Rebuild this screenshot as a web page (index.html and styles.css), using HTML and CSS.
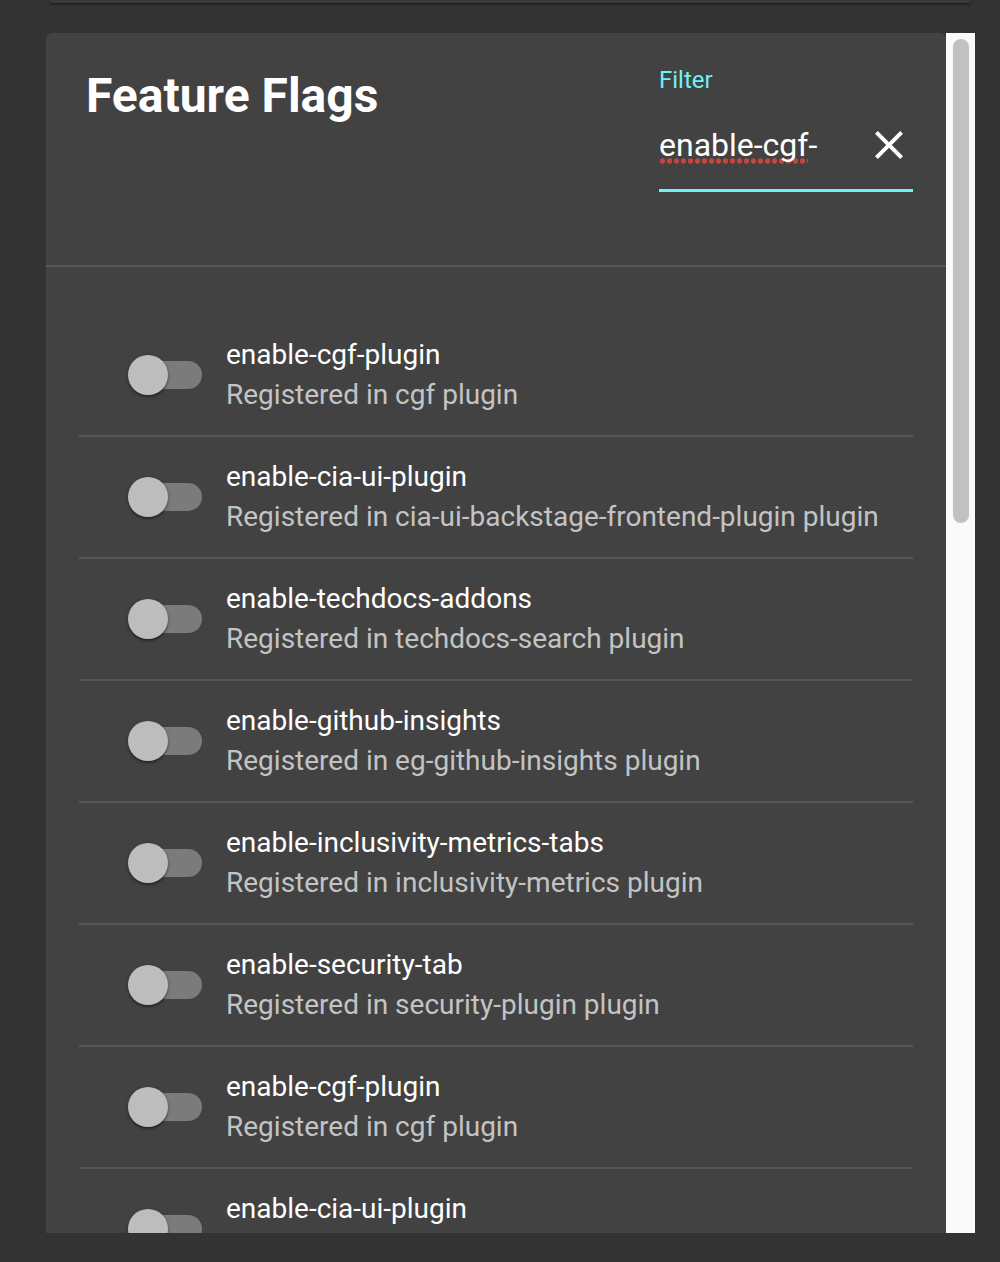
FILE: index.html
```html
<!DOCTYPE html>
<html lang="en">
<head>
<meta charset="utf-8">
<title>Feature Flags</title>
<link rel="stylesheet" href="styles.css">
</head>
<body>
<div class="peek"></div>
<div class="viewport">
  <div class="card">
    <div class="header">
      <h1 class="title">Feature Flags</h1>
      <div class="filter">
        <div class="filter-label">Filter</div>
        <div class="filter-input">
          <div class="filter-text"><span class="misspelled">enable-cgf</span>-</div>
          <svg class="clear" viewBox="0 0 24 24" width="48" height="48"><path fill="#ffffff" d="M19 6.41L17.59 5 12 10.59 6.41 5 5 6.41 10.59 12 5 17.59 6.41 19 12 13.41 17.59 19 19 17.59 13.41 12z"/></svg>
        </div>
      </div>
    </div>
    <ul class="list">
      <li class="item"><span class="switch"><span class="track"></span><span class="thumb"></span></span><div class="text"><div class="primary">enable-cgf-plugin</div><div class="secondary">Registered in cgf plugin</div></div></li>
      <li class="item"><span class="switch"><span class="track"></span><span class="thumb"></span></span><div class="text"><div class="primary">enable-cia-ui-plugin</div><div class="secondary">Registered in cia-ui-backstage-frontend-plugin plugin</div></div></li>
      <li class="item"><span class="switch"><span class="track"></span><span class="thumb"></span></span><div class="text"><div class="primary">enable-techdocs-addons</div><div class="secondary">Registered in techdocs-search plugin</div></div></li>
      <li class="item"><span class="switch"><span class="track"></span><span class="thumb"></span></span><div class="text"><div class="primary">enable-github-insights</div><div class="secondary">Registered in eg-github-insights plugin</div></div></li>
      <li class="item"><span class="switch"><span class="track"></span><span class="thumb"></span></span><div class="text"><div class="primary">enable-inclusivity-metrics-tabs</div><div class="secondary">Registered in inclusivity-metrics plugin</div></div></li>
      <li class="item"><span class="switch"><span class="track"></span><span class="thumb"></span></span><div class="text"><div class="primary">enable-security-tab</div><div class="secondary">Registered in security-plugin plugin</div></div></li>
      <li class="item"><span class="switch"><span class="track"></span><span class="thumb"></span></span><div class="text"><div class="primary">enable-cgf-plugin</div><div class="secondary">Registered in cgf plugin</div></div></li>
      <li class="item"><span class="switch"><span class="track"></span><span class="thumb"></span></span><div class="text"><div class="primary">enable-cia-ui-plugin</div><div class="secondary">Registered in cia-ui-backstage-frontend-plugin plugin</div></div></li>
    </ul>
  </div>
  <div class="scrollbar"><div class="scroll-thumb"></div></div>
</div>
</body>
</html>
```

FILE: styles.css
```css
* { box-sizing: border-box; }
html, body {
  margin: 0;
  padding: 0;
  background: #333333;
  font-family: Roboto, "Liberation Sans", Arial, sans-serif;
  color: #ffffff;
}
body { height: 1262px; overflow: hidden; }

.peek {
  height: 3px;
  margin: 0 29px 0 50px;
  background: #3a3a3a;
  border-radius: 0 0 4px 4px;
  box-shadow: 0 1px 3px rgba(0, 0, 0, 0.6);
}

.viewport {
  display: flex;
  margin: 30px 0 0 46px;
  width: 929px;
  height: 1200px;
}

.card {
  width: 900px;
  height: 1200px;
  background: #424242;
  border-radius: 6px 6px 0 0;
  overflow: hidden;
}

.header {
  height: 234px;
  padding: 35px 33px 0 40px;
  display: flex;
  justify-content: space-between;
  align-items: flex-start;
  border-bottom: 2px solid #575757;
}

.title {
  margin: 0;
  font-size: 48px;
  line-height: 56px;
  font-weight: 700;
}

.filter {
  width: 254px;
  border-bottom: 3px solid #70f0f6;
  padding-bottom: 20px;
}

.filter-label {
  color: #70f0f6;
  font-size: 24px;
  line-height: 24px;
}

.filter-input {
  margin-top: 29px;
  height: 48px;
  display: flex;
  align-items: center;
  justify-content: space-between;
}

.filter-text {
  font-size: 32px;
  line-height: 40px;
}

.misspelled {
  background-image: radial-gradient(circle, #c4473d 2.4px, transparent 2.9px);
  background-size: 7px 6px;
  background-repeat: repeat-x;
  background-position: 0 100%;
}

.clear { display: block; }

.list {
  list-style: none;
  margin: 0;
  padding: 48px 33px 0;
}

.item {
  height: 122px;
  display: flex;
  align-items: center;
  border-bottom: 2px solid #575757;
  padding-left: 49px;
}

.switch {
  position: relative;
  width: 74px;
  height: 40px;
  flex: none;
  margin-right: 24px;
}

.track {
  position: absolute;
  left: 6px;
  top: 6px;
  width: 68px;
  height: 28px;
  border-radius: 14px;
  background: #7b7b7b;
}

.thumb {
  position: absolute;
  left: 0;
  top: 0;
  width: 40px;
  height: 40px;
  border-radius: 50%;
  background: #bdbdbd;
  box-shadow: 0 2px 2px rgba(0, 0, 0, 0.3), 0 1px 4px rgba(0, 0, 0, 0.2);
}

.primary {
  font-size: 28px;
  line-height: 40px;
  color: #ffffff;
  white-space: nowrap;
}

.secondary {
  font-size: 28px;
  line-height: 40px;
  color: rgba(255, 255, 255, 0.7);
  white-space: nowrap;
}

.scrollbar {
  width: 29px;
  height: 1200px;
  background: #fafafa;
  padding: 6px 0 0 7px;
}

.scroll-thumb {
  width: 16px;
  height: 484px;
  border-radius: 8px;
  background: #c1c1c1;
}
```
